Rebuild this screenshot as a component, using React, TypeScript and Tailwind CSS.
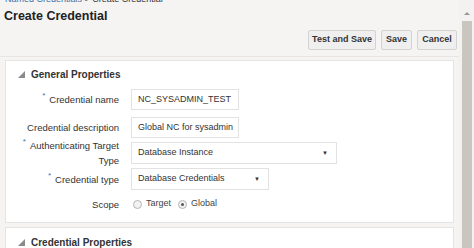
import React from "react";

const font = { fontFamily: '"Liberation Sans", Arial, sans-serif' };

function Caret() {
  return (
    <svg width="7" height="7" viewBox="0 0 7 7" className="shrink-0">
      <polygon points="7,0 7,7 0,7" fill="#8a8a8a" />
    </svg>
  );
}

function Req() {
  return <span className="mr-[4px] align-top text-[8px] leading-none text-[#3b73b9]">*</span>;
}

function Row({ label, children, h = "h-[21px]" }: { label: React.ReactNode; children: React.ReactNode; h?: string }) {
  return (
    <div className={`flex items-center ${h}`}>
      <div className="w-[113px] text-right text-[9.5px] leading-[15px] text-[#333]">{label}</div>
      <div className="ml-[12px] flex items-center">{children}</div>
    </div>
  );
}

function Select({ value, w }: { value: string; w: string }) {
  return (
    <div className={`flex h-[22px] ${w} items-center justify-between border border-[#e2e2e2] bg-white pl-[6px] pr-[8px] text-[9px] text-[#333]`}>
      <span>{value}</span>
      <span className="text-[6px] text-[#333]">▼</span>
    </div>
  );
}

function Input({ value }: { value: string }) {
  return (
    <div className="flex h-[21px] w-[108px] items-center border border-[#e2e2e2] bg-white pl-[6px] text-[9px] text-[#333]">
      {value}
    </div>
  );
}

function Radio({ checked }: { checked?: boolean }) {
  return (
    <span className="flex h-[9px] w-[9px] items-center justify-center rounded-full border border-[#b5b5b5] bg-[#f2f2f2]">
      {checked && <span className="h-[3px] w-[3px] rounded-full bg-[#555]" />}
    </span>
  );
}

export default function App() {
  return (
    <div className="flex h-[248px] w-[474px] overflow-hidden bg-[#f5f4f3]" style={font}>
      <div className="flex w-[459px] flex-col">
        <div className="h-[57px] shrink-0 border-b border-[#e6e5e3]">
          <div className="mt-[-6px] h-[10px] pl-[5px] text-[9px] leading-[10px]">
            <span className="text-[#3d6fa8]">Named Credentials</span>
            <span className="text-[#555]"> &gt; </span>
            <span className="text-[#333]">Create Credential</span>
          </div>
          <h1 className="pl-[4px] pt-[4px] text-[12.5px] font-bold leading-[16px] text-[#222]">Create Credential</h1>
          <div className="mt-[6px] flex justify-end gap-[5px] pr-[2px]">
            <button className="h-[20px] w-[68px] rounded-[2px] border border-[#d3d3d3] bg-[#efefef] text-[9px] font-bold text-[#333]">
              Test and Save
            </button>
            <button className="h-[20px] w-[31px] rounded-[2px] border border-[#d3d3d3] bg-[#efefef] text-[9px] font-bold text-[#333]">
              Save
            </button>
            <button className="h-[20px] w-[40px] rounded-[2px] border border-[#d3d3d3] bg-[#efefef] text-[9px] font-bold text-[#333]">
              Cancel
            </button>
          </div>
        </div>

        <div className="mx-[5px] mt-[3px] h-[163px] shrink-0 border border-[#e4e4e4] bg-white">
          <div className="flex h-[26px] items-center gap-[6px] pl-[12px] pt-[1px]">
            <Caret />
            <span className="text-[10px] font-bold text-[#333]">General Properties</span>
          </div>
          <div className="mt-[2px] flex flex-col">
            <Row label={<><Req />Credential name</>}>
              <Input value="NC_SYSADMIN_TEST" />
            </Row>
            <div className="h-[7px]" />
            <Row label="Credential description">
              <Input value="Global NC for sysadmin" />
            </Row>
            <div className="h-[2px]" />
            <Row h="h-[26px]" label={<><Req />Authenticating Target<br />Type</>}>
              <Select value="Database Instance" w="w-[206px]" />
            </Row>
            <div className="h-[2px]" />
            <Row h="h-[22px]" label={<><Req />Credential type</>}>
              <Select value="Database Credentials" w="w-[138px]" />
            </Row>
            <div className="h-[3px]" />
            <Row h="h-[22px]" label="Scope">
              <div className="flex items-center gap-[4px] pl-[2px] text-[9px] text-[#444]">
                <Radio />
                <span className="mr-[3px]">Target</span>
                <Radio checked />
                <span>Global</span>
              </div>
            </Row>
          </div>
        </div>

        <div className="mx-[5px] mt-[4px] flex-1 border border-[#e4e4e4] bg-white">
          <div className="flex h-[26px] items-center gap-[6px] pl-[12px] pt-[3px]">
            <Caret />
            <span className="text-[10px] font-bold text-[#333]">Credential Properties</span>
          </div>
        </div>
      </div>

      <div className="flex w-[15px] flex-col items-center bg-[#f3f2f1]">
        <div className="mt-[12px] h-0 w-0 border-x-[3px] border-b-[3px] border-x-transparent border-b-[#999]" />
        <div className="mt-[6px] w-[10px] flex-1 bg-[#c9c5bf]" />
      </div>
    </div>
  );
}
